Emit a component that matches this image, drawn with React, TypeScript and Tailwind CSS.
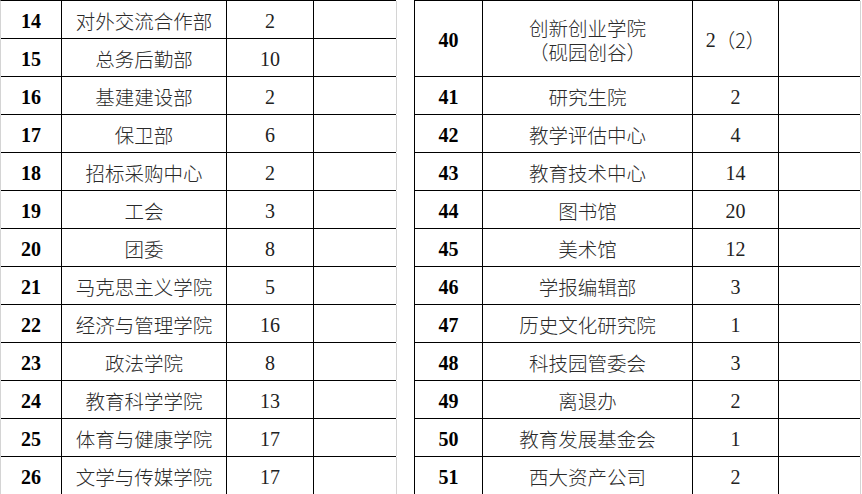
import React from 'react';

const LEFT: [string, string, string][] = [
  ['14', '对外交流合作部', '2'],
  ['15', '总务后勤部', '10'],
  ['16', '基建建设部', '2'],
  ['17', '保卫部', '6'],
  ['18', '招标采购中心', '2'],
  ['19', '工会', '3'],
  ['20', '团委', '8'],
  ['21', '马克思主义学院', '5'],
  ['22', '经济与管理学院', '16'],
  ['23', '政法学院', '8'],
  ['24', '教育科学学院', '13'],
  ['25', '体育与健康学院', '17'],
  ['26', '文学与传媒学院', '17'],
];

const RIGHT: [string, string, string][] = [
  ['41', '研究生院', '2'],
  ['42', '教学评估中心', '4'],
  ['43', '教育技术中心', '14'],
  ['44', '图书馆', '20'],
  ['45', '美术馆', '12'],
  ['46', '学报编辑部', '3'],
  ['47', '历史文化研究院', '1'],
  ['48', '科技园管委会', '3'],
  ['49', '离退办', '2'],
  ['50', '教育发展基金会', '1'],
  ['51', '西大资产公司', '2'],
];

const NO = "text-[20px] font-bold text-black font-['Liberation_Serif',serif] pt-[2px]";
const NAME = "text-[19.5px] font-light text-[#2a2a2a] font-['Noto_Sans_CJK_SC',sans-serif] pt-[2px]";
const COUNT = "text-[20px] text-[#222] font-['Liberation_Serif','Noto_Sans_CJK_SC',serif] pt-[2px]";

function Cell({ children, className = '' }: { children?: React.ReactNode; className?: string }) {
  return (
    <div className={`flex items-center justify-center border-r border-black text-center ${className}`}>
      {children}
    </div>
  );
}

function Row({ no, name, count, cols }: { no: string; name: string; count: string; cols: string }) {
  return (
    <div className={`grid h-[38px] border-b border-black ${cols}`}>
      <Cell className={NO}>{no}</Cell>
      <Cell className={NAME}>{name}</Cell>
      <Cell className={COUNT}>{count}</Cell>
      <Cell className="border-r-[#d4d4d4]" />
    </div>
  );
}

export default function App() {
  return (
    <div className="w-[862px] h-[494px] overflow-hidden bg-white flex items-start">
      {/* Left table */}
      <div className="w-[396px] border-t border-l border-t-black border-l-[#d4d4d4]">
        {LEFT.map(([no, name, count]) => (
          <Row key={no} no={no} name={name} count={count} cols="grid-cols-[61px_165px_87px_83px]" />
        ))}
      </div>

      {/* Right table */}
      <div className="ml-[18px] w-[446px] border-t border-l border-black">
        <div className="grid grid-cols-[68px_210px_86px_82px] h-[76px] border-b border-black">
          <Cell className={NO}>40</Cell>
          <Cell className={`flex-col leading-[24px] ${NAME}`}>
            <span>创新创业学院</span>
            <span>（砚园创谷）</span>
          </Cell>
          <Cell className={COUNT}>
            2<span className="font-light font-['Noto_Sans_CJK_SC',sans-serif] text-[19.5px]">（2）</span>
          </Cell>
          <Cell className="border-r-[#d4d4d4]" />
        </div>
        {RIGHT.map(([no, name, count]) => (
          <Row key={no} no={no} name={name} count={count} cols="grid-cols-[68px_210px_86px_82px]" />
        ))}
      </div>
    </div>
  );
}
